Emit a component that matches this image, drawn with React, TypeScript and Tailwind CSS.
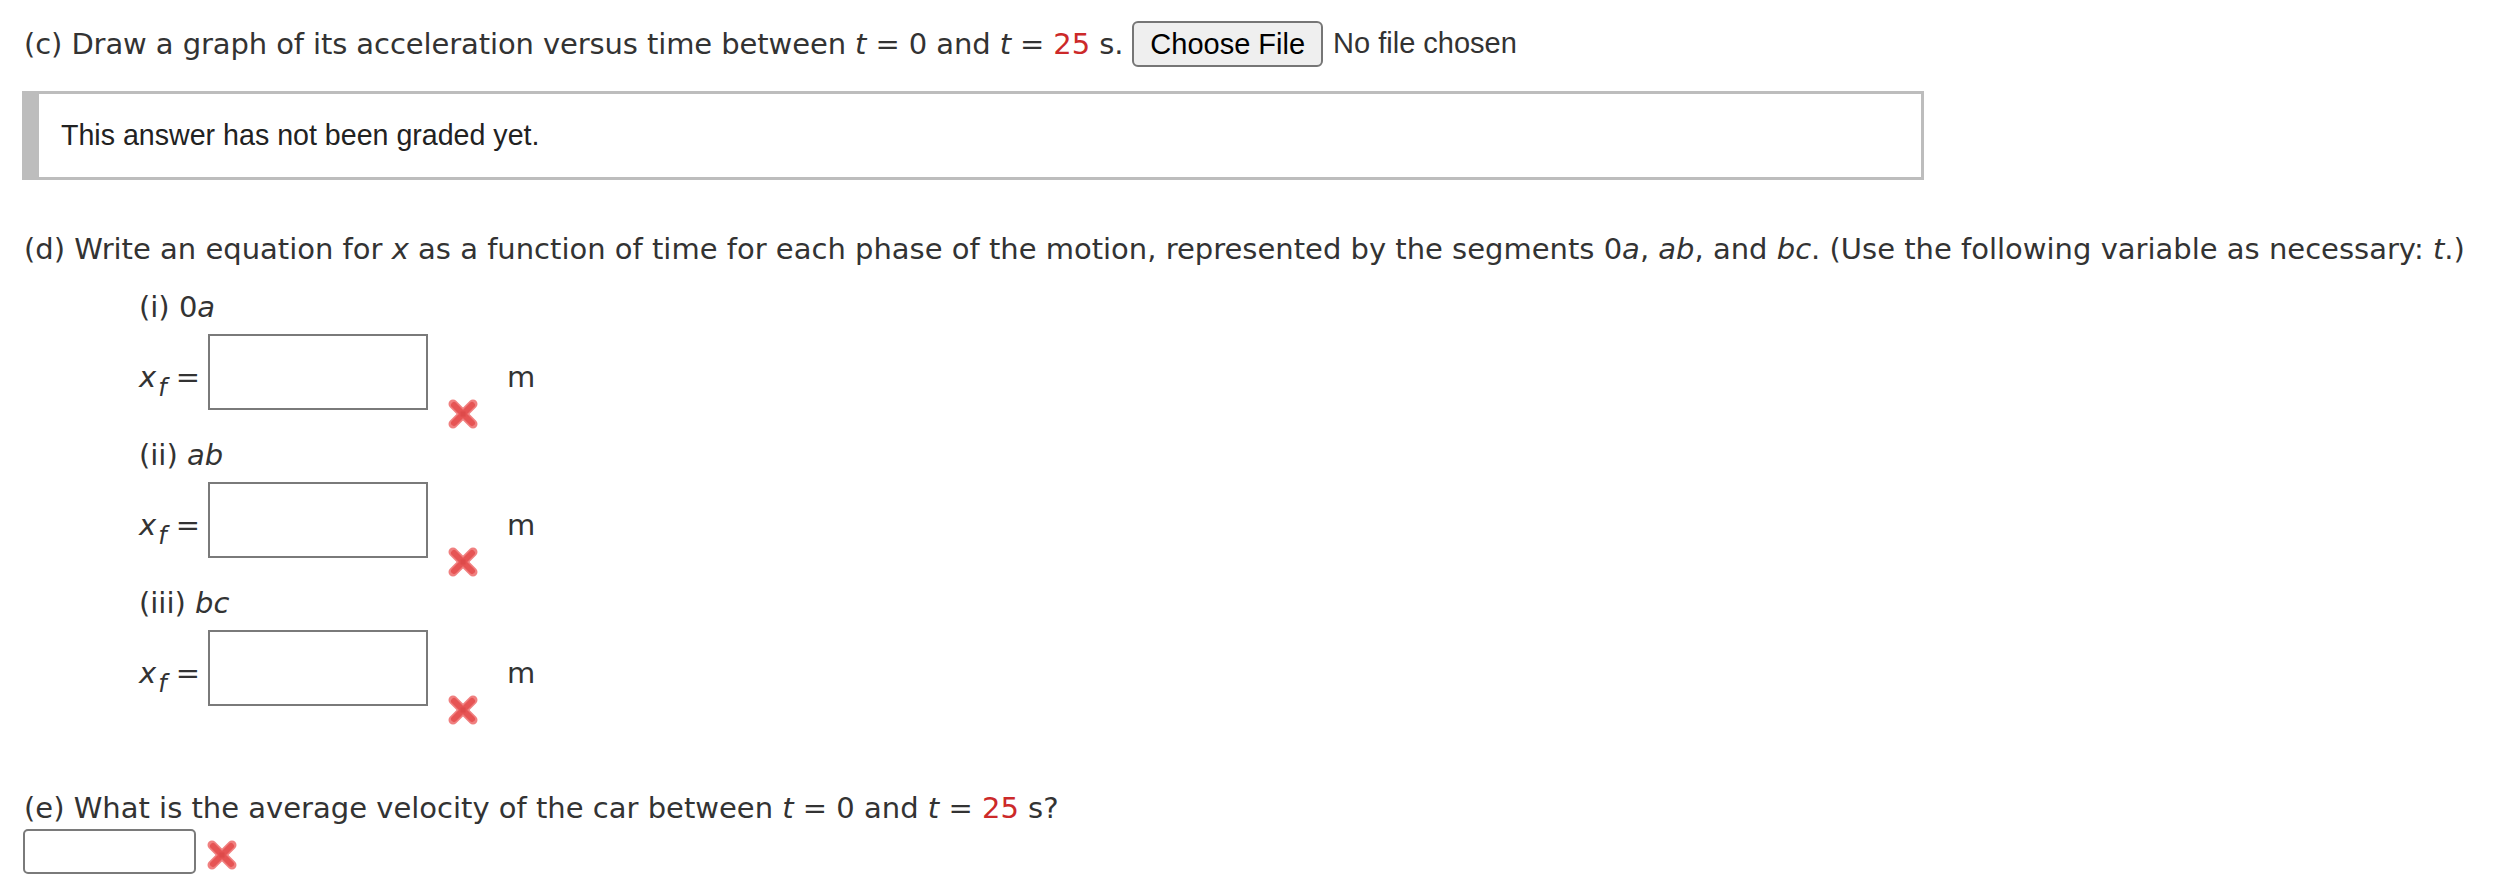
import React from 'react';

const body = "font-['DejaVu_Sans',Verdana,sans-serif] text-[29px] leading-[34px] text-[#333333]";
const sans = "font-['Liberation_Sans',Arial,sans-serif]";

function WrongMark() {
  return (
    <svg width="30" height="30" viewBox="0 0 30 30" className="block shrink-0">
      <g strokeLinecap="round">
        <line x1="5" y1="5" x2="25" y2="25" stroke="#f08080" strokeWidth="9" />
        <line x1="25" y1="5" x2="5" y2="25" stroke="#f08080" strokeWidth="9" />
        <line x1="6" y1="6" x2="24" y2="24" stroke="#e65454" strokeWidth="6" />
        <line x1="24" y1="6" x2="6" y2="24" stroke="#e65454" strokeWidth="6" />
      </g>
      <rect x="12.5" y="12.5" width="5" height="5" fill="#d94444" opacity="0.6" />
    </svg>
  );
}

function Part({ label, children }: { label: string; children: React.ReactNode }) {
  return (
    <div>
      <div className={body}>
        {label} {children}
      </div>
      <div className="mt-[10px] flex items-start">
        <div className={`${body} mt-[26px] w-[69px] whitespace-nowrap`}>
          <i>x</i>
          <i className="relative top-[9px] ml-[2px] text-[24px]">f</i> =
        </div>
        <div className="h-[76px] w-[220px] border-2 border-[#7a7a7a] bg-white" />
        <div className="ml-[20px] mt-[65px]">
          <WrongMark />
        </div>
        <div className={`${body} ml-[29px] mt-[26px]`}>m</div>
      </div>
    </div>
  );
}

export default function App() {
  return (
    <div className="min-h-screen w-[2500px] bg-white pl-[24px] pt-[21px]">
      {/* (c) */}
      <div className="flex h-[46px] items-center">
        <span className={`${body} whitespace-nowrap tracking-[-0.1px]`}>
          (c) Draw a graph of its acceleration versus time between <i>t</i> = 0 and <i>t</i> ={' '}
          <span className="text-[#cc2929]">25</span> s.
        </span>
        <button className={`${sans} ml-[9px] h-[46px] rounded-[6px] border-2 border-[#767676] bg-[#efefef] px-[16px] text-[29px] text-black`}>
          Choose File
        </button>
        <span className={`${sans} ml-[10px] text-[29px] text-[#333333]`}>No file chosen</span>
      </div>

      {/* grading note */}
      <div className="ml-[-2px] mt-[24px] flex h-[89px] w-[1902px] items-center border-[3px] border-l-[17px] border-[#bdbdbd] pl-[22px]">
        <span className={`${sans} text-[28.6px] text-[#222222]`}>This answer has not been graded yet.</span>
      </div>

      {/* (d) */}
      <div className={`${body} mt-[52px] whitespace-nowrap`}>
        (d) Write an equation for <i>x</i> as a function of time for each phase of the motion, represented by the
        segments 0<i>a</i>, <i>ab</i>, and <i>bc</i>. (Use the following variable as necessary: <i>t</i>.)
      </div>

      <div className="mt-[24px] pl-[115px]">
        <Part label="(i)">
          0<i>a</i>
        </Part>
        <div className="mt-[9px]">
          <Part label="(ii)">
            <i>ab</i>
          </Part>
        </div>
        <div className="mt-[9px]">
          <Part label="(iii)">
            <i>bc</i>
          </Part>
        </div>
      </div>

      {/* (e) */}
      <div className={`${body} mt-[66px] whitespace-nowrap`}>
        (e) What is the average velocity of the car between <i>t</i> = 0 and <i>t</i> ={' '}
        <span className="text-[#cc2929]">25</span> s?
      </div>
      <div className="mt-[4px] flex items-start">
        <div className="ml-[-1px] h-[45px] w-[173px] rounded-[5px] border-2 border-[#7a7a7a]" />
        <div className="ml-[11px] mt-[11px]">
          <WrongMark />
        </div>
      </div>
    </div>
  );
}
